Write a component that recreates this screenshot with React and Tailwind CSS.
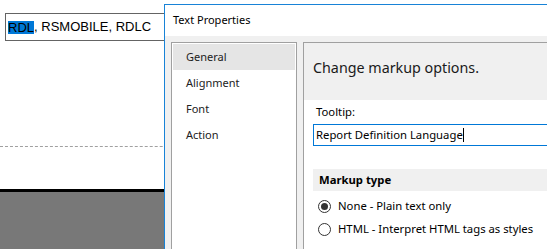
import React from 'react';

const ui = { fontFamily: '"Noto Sans", "Open Sans", sans-serif' };

function Radio({ checked, label }) {
    return (
        <div className="flex items-center h-[22px] pl-[5px]">
            <span className="w-[13px] h-[13px] rounded-full border border-[#333] bg-white flex items-center justify-center">
                {checked && <span className="w-[7px] h-[7px] rounded-full bg-[#333]" />}
            </span>
            <span className="ml-[7px] text-[11.3px] text-black">{label}</span>
        </div>
    );
}

export default function App() {
    const navItems = ['General', 'Alignment', 'Font', 'Action'];

    return (
        <div className="relative w-[547px] h-[249px] overflow-hidden bg-white">
            {/* report canvas */}
            <div className="flex flex-col h-full">
                <div className="pt-[13px] pl-[5px]">
                    <div
                        className="w-[220px] h-[28px] border border-[#646464] flex items-center pl-[2px] text-[13px] text-black"
                        style={{ fontFamily: '"Liberation Sans", Arial, sans-serif' }}
                    >
                        <span className="bg-[#0078d7] text-black leading-[13px]">RDL</span>
                        <span>, RSMOBILE, RDLC</span>
                    </div>
                </div>
                <div className="mt-[105px] border-t border-dashed border-[#a0a0a0]" />
                <div className="mt-[42px] h-[3px] bg-black" />
                <div className="flex-1 bg-[#787878]" />
            </div>

            {/* Text Properties dialog */}
            <div
                className="absolute left-[164px] top-[4px] w-[420px] h-[260px] border-l border-t border-[#1883d7] bg-[#f0f0f0] flex flex-col"
                style={ui}
            >
                <div className="h-[31px] bg-white flex items-center pl-[8px] text-[11px] text-black">Text Properties</div>
                <div className="flex flex-1 pt-[6px] pl-[6px] gap-[6px]">
                    <div className="w-[126px] border border-[#a0a0a0] bg-white pt-[1px] px-[1px]">
                        {navItems.map((item, i) => (
                            <div
                                key={item}
                                className={
                                    'h-[26px] flex items-center pl-[13px] text-[11px] text-[#222] ' +
                                    (i === 0 ? 'bg-[#e5e5e5]' : '')
                                }
                            >
                                {item}
                            </div>
                        ))}
                    </div>
                    <div className="flex-1 border-l border-t border-[#a0a0a0] bg-white flex flex-col">
                        <div className="h-[57px] bg-[#f0f0f0] pl-[9px] pt-[15px] text-[14.3px] leading-[20px] text-[#1a1a1a]">
                            Change markup options.
                        </div>
                        <div className="pl-[9px]">
                            <div className="mt-[4px] pl-[3px] text-[11.3px] leading-[16px] text-black">Tooltip:</div>
                            <div className="mt-[4px] h-[22px] border border-[#0078d7] flex items-center pl-[2px] text-[11.3px] text-black">
                                <span>Report Definition Language</span>
                                <span className="w-px h-[14px] bg-black" />
                            </div>
                            <div className="mt-[23px] h-[22px] bg-[#f0f0f0] flex items-center pl-[6px] text-[11.3px] font-bold text-black">
                                Markup type
                            </div>
                            <div className="mt-[4px] flex flex-col gap-[1px]">
                                <Radio checked label="None - Plain text only" />
                                <Radio label="HTML - Interpret HTML tags as styles" />
                            </div>
                        </div>
                    </div>
                </div>
            </div>
        </div>
    );
}
